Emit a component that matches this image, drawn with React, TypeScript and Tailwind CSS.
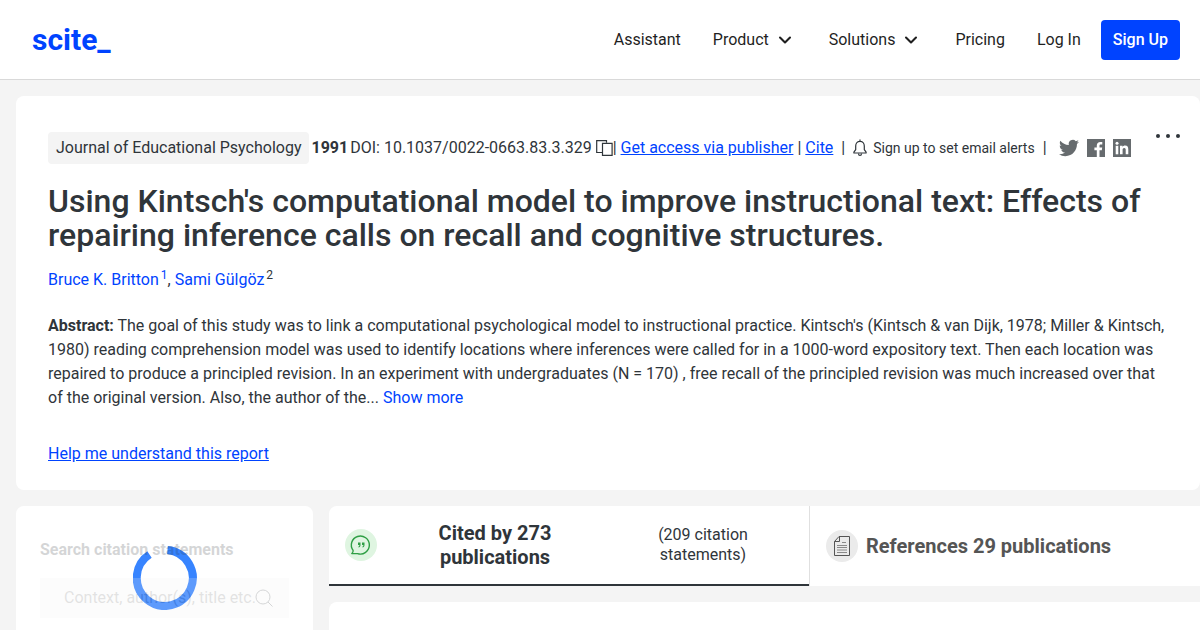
import type { ReactNode } from "react";
import { ChevronDown } from "lucide-react";

const navLink = "text-base text-[#1f1f1f]";

function NavItem({ label }: { label: string }) {
  return (
    <button type="button" className={`${navLink} flex items-center gap-1`}>
      {label}
      <span className="flex w-6 justify-center">
        <ChevronDown size={20} strokeWidth={2.5} aria-hidden="true" />
      </span>
    </button>
  );
}

function Header() {
  return (
    <header className="flex h-20 items-center justify-between border-b border-[#d9d9d9] bg-white pr-5 pl-8">
      <a href="#" className="text-[30px] leading-8 font-bold text-[#0043ff]">
        scite_
      </a>
      <nav className="flex items-center gap-8">
        <a href="#" className={navLink}>Assistant</a>
        <NavItem label="Product" />
        <NavItem label="Solutions" />
        <a href="#" className={navLink}>Pricing</a>
        <div className="flex items-center gap-5">
          <a href="#" className={navLink}>Log In</a>
          <a href="#" className="flex h-10 items-center rounded bg-[#0043ff] px-3 font-medium text-white">
            Sign Up
          </a>
        </div>
      </nav>
    </header>
  );
}

function CopyIcon() {
  return (
    <svg width="17" height="16" viewBox="0 0 17 16" fill="none" stroke="currentColor" strokeWidth="1.2" aria-hidden="true">
      <path d="M6 12.500H.7V.6h9.800v2.200" />
      <path d="M6.500 3.300h9.600v12H6.500z" />
    </svg>
  );
}

function BellIcon() {
  return (
    <svg width="14" height="18" viewBox="0 0 14 18" fill="none" stroke="currentColor" strokeWidth="1.2" aria-hidden="true">
      <path d="M7 .5v1.700M2.700 7c0-2.800 1.800-4.700 4.300-4.700S11.300 4.200 11.300 7v3.600l1.800 2.600v.8H.9v-.8l1.800-2.600z" strokeLinejoin="round" />
      <path d="M5.500 14.500c0 1.200.6 2 1.500 2s1.500-.8 1.500-2" />
    </svg>
  );
}

function TwitterIcon() {
  return (
    <svg width="20" height="20" viewBox="0 0 24 24" fill="currentColor" aria-hidden="true">
      <path d="M23.950 4.570a10 10 0 01-2.820.77 4.960 4.960 0 002.160-2.720c-.95.550-2.010.950-3.130 1.180a4.920 4.920 0 00-8.380 4.480C7.690 8.100 4.070 6.130 1.640 3.160a4.820 4.820 0 00-.67 2.480c0 1.710.87 3.210 2.190 4.100a4.900 4.900 0 01-2.230-.620v.060a4.920 4.920 0 003.950 4.830 5 5 0 01-2.210.080 4.940 4.940 0 004.600 3.420A9.870 9.870 0 010 19.540a13.990 13.990 0 007.550 2.210c9.050 0 14-7.500 14-13.980 0-.210 0-.420-.02-.630a9.940 9.940 0 002.460-2.550z" />
    </svg>
  );
}

function FacebookIcon() {
  return (
    <svg width="18" height="18" viewBox="0 0 18 18" fill="currentColor" aria-hidden="true">
      <path d="M0 0h18v18h-5.500v-6.800h2.300l.4-2.700h-2.700V6.900c0-.8.3-1.300 1.400-1.300h1.400V3.100c-.4-.1-1.100-.1-2-.1-2.100 0-3.500 1.200-3.500 3.500v2H7.400v2.700h2.400V18H0z" />
    </svg>
  );
}

function LinkedinIcon() {
  return (
    <svg width="18" height="18" viewBox="0 0 18 18" aria-hidden="true">
      <path fill="currentColor" d="M0 0h18v18H0z" />
      <path fill="#fff" d="M2.700 6.800h2.600v8.500H2.700z" />
      <circle cx="4" cy="4.200" r="1.500" fill="#fff" />
      <path fill="#fff" d="M7 6.800h2.500V8c.5-.8 1.400-1.400 2.600-1.400 2.500 0 3.200 1.600 3.200 4v4.700h-2.600v-4.200c0-1.200-.1-2.200-1.500-2.200S9.600 9.900 9.600 11v4.300H7z" />
    </svg>
  );
}

function QuoteIcon() {
  return (
    <svg width="32" height="32" viewBox="0 0 32 32" fill="none" aria-hidden="true">
      <circle cx="16" cy="16" r="16" fill="#dff5e1" />
      <path d="M6.800 24.600c1-.7 1.500-1.700 1.300-3.200A9 9 0 1 1 12.500 24.600z" stroke="#2e9e44" strokeWidth="1.400" strokeLinejoin="round" />
      <path d="M13 13.500h2.500v2.500c0 1.400-.8 2.300-2 2.500v-1c.6-.2.900-.7.900-1.400H13zM17 13.500h2.500v2.500c0 1.400-.8 2.300-2 2.500v-1c.6-.2.900-.7.900-1.400H17z" fill="#2e9e44" />
    </svg>
  );
}

function DocumentIcon() {
  return (
    <svg width="32" height="32" viewBox="0 0 32 32" fill="none" aria-hidden="true">
      <circle cx="16" cy="16" r="16" fill="#ebebeb" />
      <path d="M13 6.500h10.500v19h-15V11.500z" stroke="#555" strokeLinejoin="round" />
      <path d="M13.500 6.500v5h-5" stroke="#555" />
      <path d="M16 12.500h4M11 15.500h10M11 17.500h10M11 20h10M11 22.500h10" stroke="#8a8a8a" />
    </svg>
  );
}

function SearchIcon() {
  return (
    <svg width="18" height="18" viewBox="0 0 18 18" fill="none" stroke="#2f353a" aria-hidden="true">
      <circle cx="8" cy="8" r="7" />
      <path d="M13 13l4.500 4.500" />
    </svg>
  );
}

function Dot() {
  return <span className="size-1 rounded-full bg-[#2f353a]" />;
}

function Paper() {
  return (
    <section className="relative rounded-lg bg-white px-8 pt-9 pb-6">
      <div className="flex items-center whitespace-nowrap">
        <span className="rounded bg-[#f4f4f4] px-2 py-1">Journal of Educational Psychology</span>
        <b className="ml-0.5 font-bold">1991</b>
        <span className="ml-0.5">DOI: 10.1037/0022-0663.83.3.329</span>
        <button type="button" aria-label="Copy DOI" className="ml-1">
          <CopyIcon />
        </button>
        <span className="mr-1">|</span>
        <a href="#" className="text-[#0043ff] underline">Get access via publisher</a>
        <span className="mx-1">|</span>
        <a href="#" className="text-[#0043ff] underline">Cite</a>
        <span className="mx-2">|</span>
        <button type="button" className="flex items-center gap-1.5 text-sm">
          <BellIcon />
          Sign up to set email alerts
        </button>
        <span className="ml-2">|</span>
        <div className="ml-3 flex items-center gap-2 text-[#666b6e]">
          <a href="#" aria-label="Twitter"><TwitterIcon /></a>
          <a href="#" aria-label="Facebook"><FacebookIcon /></a>
          <a href="#" aria-label="LinkedIn"><LinkedinIcon /></a>
        </div>
      </div>
      <button type="button" aria-label="More options" className="absolute top-9 right-5 flex h-2 items-center gap-1.5">
        <Dot />
        <Dot />
        <Dot />
      </button>
      <h1 className="mt-5 text-[32px] leading-[34px] font-medium">
        Using Kintsch's computational model to improve instructional text: Effects of repairing inference calls on recall and cognitive structures.
      </h1>
      <p className="mt-4 leading-6">
        <a href="#" className="text-[#0043ff]">Bruce K. Britton<sup className="ml-0.5">1</sup></a>
        , <a href="#" className="text-[#0043ff]">Sami Gülgöz</a>
        <sup className="ml-0.5">2</sup>
      </p>
      <p className="mt-[22px] leading-6">
        <b className="font-bold">Abstract:</b> The goal of this study was to link a computational psychological model to instructional practice. Kintsch's (Kintsch &amp; van Dijk, 1978; Miller &amp; Kintsch, 1980) reading comprehension model was used to identify locations where inferences were called for in a 1000-word expository text. Then each location was repaired to produce a principled revision. In an experiment with undergraduates (N = 170) , free recall of the principled revision was much increased over that of the original version. Also, the author of the... <button type="button" className="text-[#0043ff]">Show more</button>
      </p>
      <a href="#" className="mt-8 inline-block leading-6 text-[#0043ff] underline">Help me understand this report</a>
    </section>
  );
}

function SearchPanel() {
  return (
    <aside className="relative w-[297px] shrink-0 rounded-lg bg-white px-6 pt-8 pb-12">
      <svg className="absolute top-10 left-[117px]" width="64" height="64" viewBox="0 0 64 64" fill="none" aria-hidden="true">
        <path d="M34.500 4.100A28 28 0 1 1 16.500 8.500" stroke="#3784ff" strokeWidth="8" />
      </svg>
      <form className="relative opacity-20">
        <label htmlFor="statement-search" className="block leading-6 font-bold">Search citation statements</label>
        <div className="mt-4 flex h-10 items-center bg-[#f4f4f4] pr-4 pl-6">
          <input
            id="statement-search"
            type="text"
            placeholder="Context, author(s), title etc."
            className="w-full min-w-0 flex-1 outline-none placeholder:text-[#757575]"
          />
          <SearchIcon />
        </div>
      </form>
    </aside>
  );
}

function Tab({ active, children }: { active?: boolean; children: ReactNode }) {
  return (
    <button
      type="button"
      role="tab"
      aria-selected={!!active}
      className={
        active
          ? "flex h-20 w-[480px] shrink-0 items-center gap-7 border-b-2 border-[#2f353a] px-4"
          : "flex h-20 flex-1 items-center gap-2 border-l border-[#e0e0e0] px-4 text-[#555]"
      }
    >
      {children}
    </button>
  );
}

export default function App() {
  return (
    <div className="h-screen overflow-hidden bg-[#f4f4f4] font-['Roboto',sans-serif] text-base text-[#2f353a]">
      <Header />
      <main className="flex flex-col gap-4 pt-4 pl-4">
        <Paper />
        <div className="flex gap-4">
          <SearchPanel />
          <div className="flex min-w-0 flex-1 flex-col gap-4">
            <div role="tablist" className="flex rounded-tl-lg bg-white">
              <Tab active>
                <QuoteIcon />
                <span className="flex-1 text-xl leading-6 font-bold">
                  Cited by 273
                  <br />
                  publications
                </span>
                <span className="flex-1 text-base leading-5">
                  (209 citation
                  <br />
                  statements)
                </span>
              </Tab>
              <Tab>
                <DocumentIcon />
                <span className="text-xl font-bold">References 29 publications</span>
              </Tab>
            </div>
            <div className="h-20 rounded-tl-lg bg-white" />
          </div>
        </div>
      </main>
    </div>
  );
}
